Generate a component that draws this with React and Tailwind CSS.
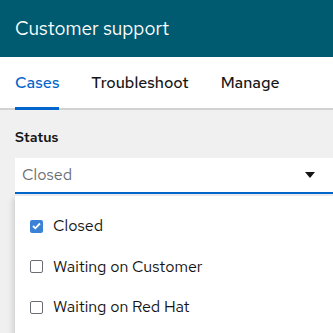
export default function App() {
  const font = { fontFamily: '"Red Hat Text", "Open Sans", "Liberation Sans", sans-serif' };
  return (
    <div className="w-[333px] h-[333px] overflow-hidden bg-[#f0f0f0] flex flex-col" style={font}>
      <div className="h-[57px] bg-[#005a70] flex items-center px-[15px] shrink-0">
        <span className="text-white text-[19px] leading-none">Customer support</span>
      </div>
      <div className="h-[53px] bg-white border-b-2 border-[#d2d2d2] flex items-stretch px-[15px] gap-[32px] shrink-0">
        <div className="relative flex items-center text-[#06c] text-[16px] font-medium">
          Cases
          <div className="absolute left-0 right-0 -bottom-[2px] h-[3px] bg-[#06c]" />
        </div>
        <div className="flex items-center text-[#151515] text-[16px] font-medium">Troubleshoot</div>
        <div className="flex items-center text-[#151515] text-[16px] font-medium">Manage</div>
      </div>
      <div className="pl-[15px] flex flex-col">
        <div className="text-[14px] font-semibold text-[#151515] mt-[17px] leading-5">Status</div>
        <div className="mt-[11px] h-[36px] bg-white border-b-2 border-[#06c] flex items-center justify-between pl-[7px] pr-[18px]">
          <span className="text-[16px] text-[#6a6e73]">Closed</span>
          <svg width="10" height="6" viewBox="0 0 10 6"><path d="M0 0h10L5 6z" fill="#151515" /></svg>
        </div>
        <div className="mt-[2px] bg-white h-[200px] shadow-[-2px_2px_6px_rgba(0,0,0,0.15)] pt-[10px] flex flex-col">
          {[
            ["Closed", true],
            ["Waiting on Customer", false],
            ["Waiting on Red Hat", false],
          ].map(([label, checked]) => (
            <div key={label} className="h-[40.5px] flex items-center pl-[15px] gap-[10px]">
              {checked ? (
                <span className="w-[13px] h-[13px] rounded-[2px] bg-[#3b82d6] flex items-center justify-center">
                  <svg width="9" height="8" viewBox="0 0 9 8"><path d="M1 4l2.3 2.3L8 1.5" stroke="white" strokeWidth="1.8" fill="none" /></svg>
                </span>
              ) : (
                <span className="w-[13px] h-[13px] rounded-[2px] border-[1.5px] border-[#6a6e73] bg-white" />
              )}
              <span className="text-[16px] text-[#151515]">{label}</span>
            </div>
          ))}
        </div>
      </div>
    </div>
  );
}
